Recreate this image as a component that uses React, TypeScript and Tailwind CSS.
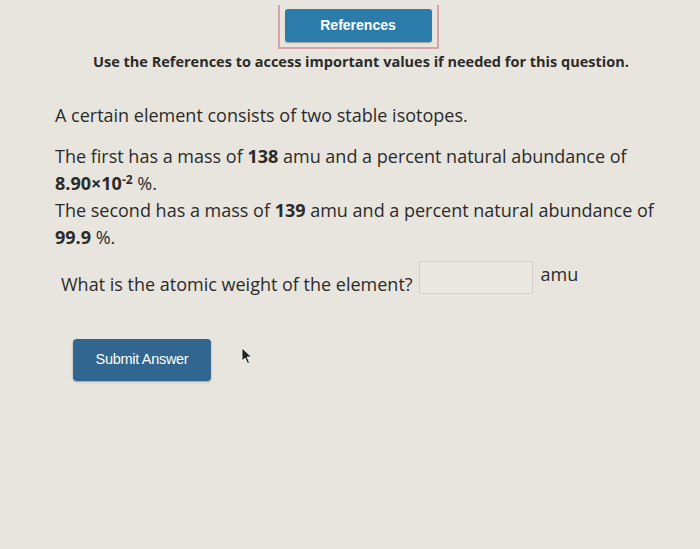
import React, { useState } from 'react';

const App: React.FC = () => {
  const [answer, setAnswer] = useState('');

  return (
    <div className="w-[700px] h-[549px] overflow-hidden bg-[#e8e5de] text-[#2b2b2b] font-['Open_Sans',sans-serif]">
      {/* References tab */}
      <div className="flex justify-center pt-[5px] pl-[16px]">
        <div className="border-2 border-t-0 border-[#d7a3ab] px-[5px] pb-[5px] pt-[4px]">
          <button className="w-[147px] h-[33px] rounded-[3px] bg-[#2c7cab] text-white text-[14px] font-bold font-['Liberation_Sans',sans-serif] shadow-[0_1px_1px_rgba(0,0,0,0.3)]">
            References
          </button>
        </div>
      </div>

      <p className="mt-[2px] pl-[93px] text-[14.5px] font-bold text-[#2b2b2b]">
        Use the References to access important values if needed for this question.
      </p>

      <div className="pl-[55px] pr-[20px] text-[18px] leading-[27px]">
        <p className="mt-[29px]">A certain element consists of two stable isotopes.</p>

        <p className="mt-[14px]">
          The first has a mass of <b>138</b> amu and a percent natural abundance of
          <br />
          <b>
            8.90×10<sup className="text-[12px]">-2</sup>
          </b>{' '}
          %.
          <br />
          The second has a mass of <b>139</b> amu and a percent natural abundance of
          <br />
          <b>99.9</b> %.
        </p>

        <div className="mt-[10px] flex items-start pl-[6px]">
          <span className="mt-[10px]">What is the atomic weight of the element?</span>
          <input
            value={answer}
            onChange={(e) => setAnswer(e.target.value)}
            className="ml-[6px] w-[114px] h-[33px] border border-[#d4d1ca] bg-[#ebe8e1] outline-none px-2"
          />
          <span className="ml-[8px]">amu</span>
        </div>

        <div className="mt-[41px] flex items-start pl-[18px]">
          <button className="w-[138px] h-[42px] rounded-[4px] bg-[#30668f] text-white text-[14.5px] font-medium font-['Liberation_Sans',sans-serif] tracking-[-0.3px] shadow-[0_1px_2px_rgba(0,0,0,0.3)]">
            Submit Answer
          </button>
          <svg className="ml-[30px] mt-[8px]" width="12" height="18" viewBox="0 0 12 18">
            <path d="M1 1 L1 14 L4 11 L6.5 16.5 L8.5 15.5 L6 10 L10.5 10 Z" fill="#222" stroke="#fff" strokeWidth="0.8" />
          </svg>
        </div>
      </div>
    </div>
  );
};

export default App;
